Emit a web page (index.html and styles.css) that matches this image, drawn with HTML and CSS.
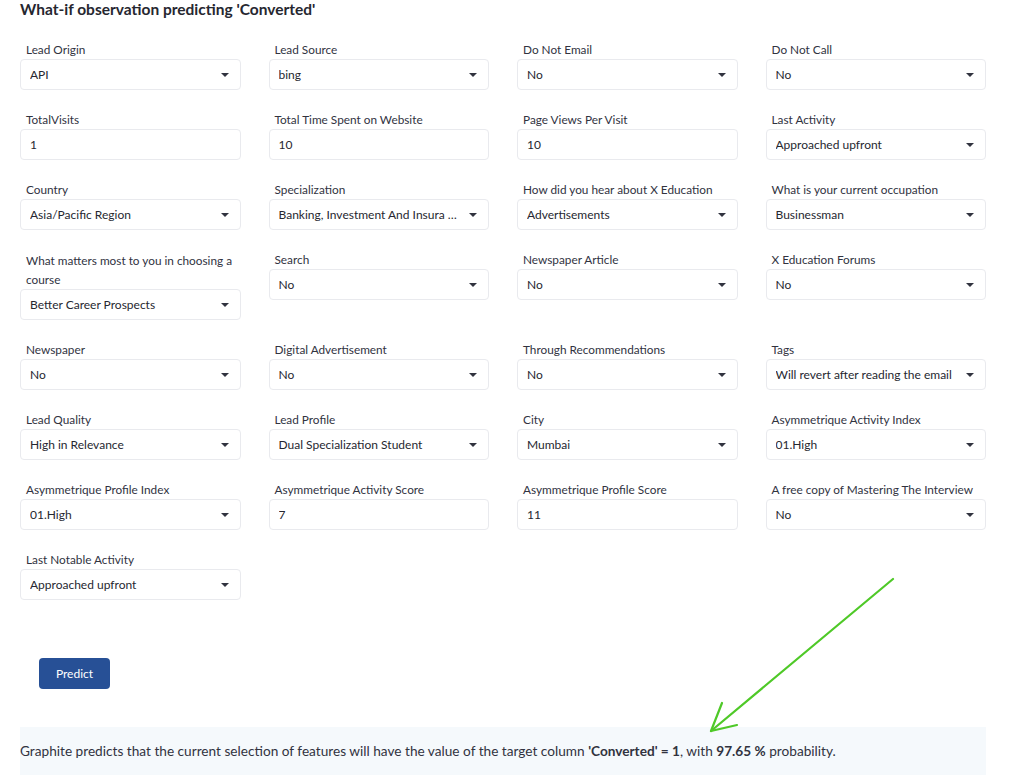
FILE: index.html
```html
<!DOCTYPE html>
<html>
<head>
<meta charset="utf-8">
<link rel="stylesheet" href="styles.css">
</head>
<body>
<div class="page">
  <h2 class="title">What-if observation predicting 'Converted'</h2>
  <div class="grid">
    <div class="field"><div class="label">Lead Origin</div><div class="box select"><span class="val">API</span><span class="caret"></span></div></div>
    <div class="field"><div class="label">Lead Source</div><div class="box select"><span class="val">bing</span><span class="caret"></span></div></div>
    <div class="field"><div class="label">Do Not Email</div><div class="box select"><span class="val">No</span><span class="caret"></span></div></div>
    <div class="field"><div class="label">Do Not Call</div><div class="box select"><span class="val">No</span><span class="caret"></span></div></div>

    <div class="field"><div class="label">TotalVisits</div><div class="box"><span class="val">1</span></div></div>
    <div class="field"><div class="label">Total Time Spent on Website</div><div class="box"><span class="val">10</span></div></div>
    <div class="field"><div class="label">Page Views Per Visit</div><div class="box"><span class="val">10</span></div></div>
    <div class="field"><div class="label">Last Activity</div><div class="box select"><span class="val">Approached upfront</span><span class="caret"></span></div></div>

    <div class="field"><div class="label">Country</div><div class="box select"><span class="val">Asia/Pacific Region</span><span class="caret"></span></div></div>
    <div class="field"><div class="label">Specialization</div><div class="box select"><span class="val">Banking, Investment And Insura …</span><span class="caret"></span></div></div>
    <div class="field"><div class="label">How did you hear about X Education</div><div class="box select"><span class="val">Advertisements</span><span class="caret"></span></div></div>
    <div class="field"><div class="label">What is your current occupation</div><div class="box select"><span class="val">Businessman</span><span class="caret"></span></div></div>

    <div class="field"><div class="label wrap">What matters most to you in choosing a course</div><div class="box select"><span class="val">Better Career Prospects</span><span class="caret"></span></div></div>
    <div class="field"><div class="label">Search</div><div class="box select"><span class="val">No</span><span class="caret"></span></div></div>
    <div class="field"><div class="label">Newspaper Article</div><div class="box select"><span class="val">No</span><span class="caret"></span></div></div>
    <div class="field"><div class="label">X Education Forums</div><div class="box select"><span class="val">No</span><span class="caret"></span></div></div>

    <div class="field"><div class="label">Newspaper</div><div class="box select"><span class="val">No</span><span class="caret"></span></div></div>
    <div class="field"><div class="label">Digital Advertisement</div><div class="box select"><span class="val">No</span><span class="caret"></span></div></div>
    <div class="field"><div class="label">Through Recommendations</div><div class="box select"><span class="val">No</span><span class="caret"></span></div></div>
    <div class="field"><div class="label">Tags</div><div class="box select"><span class="val">Will revert after reading the email</span><span class="caret"></span></div></div>

    <div class="field"><div class="label">Lead Quality</div><div class="box select"><span class="val">High in Relevance</span><span class="caret"></span></div></div>
    <div class="field"><div class="label">Lead Profile</div><div class="box select"><span class="val">Dual Specialization Student</span><span class="caret"></span></div></div>
    <div class="field"><div class="label">City</div><div class="box select"><span class="val">Mumbai</span><span class="caret"></span></div></div>
    <div class="field"><div class="label">Asymmetrique Activity Index</div><div class="box select"><span class="val">01.High</span><span class="caret"></span></div></div>

    <div class="field"><div class="label">Asymmetrique Profile Index</div><div class="box select"><span class="val">01.High</span><span class="caret"></span></div></div>
    <div class="field"><div class="label">Asymmetrique Activity Score</div><div class="box"><span class="val">7</span></div></div>
    <div class="field"><div class="label">Asymmetrique Profile Score</div><div class="box"><span class="val">11</span></div></div>
    <div class="field"><div class="label">A free copy of Mastering The Interview</div><div class="box select"><span class="val">No</span><span class="caret"></span></div></div>

    <div class="field"><div class="label">Last Notable Activity</div><div class="box select"><span class="val">Approached upfront</span><span class="caret"></span></div></div>
  </div>
  <div class="actions"><button class="predict">Predict</button></div>
  <div class="result"><span>Graphite predicts that the current selection of features will have the value of the target column <b>'Converted' = 1</b>, with <b>97.65 %</b> probability.</span></div>
</div>
<svg class="arrow" width="1024" height="778" viewBox="0 0 1024 778">
  <g fill="none" stroke="#4fc928" stroke-width="2.2" stroke-linecap="round">
    <line x1="893" y1="579" x2="711" y2="731"/>
    <line x1="711" y1="731" x2="722" y2="703"/>
    <line x1="711" y1="731" x2="737" y2="725"/>
  </g>
</svg>
</body>
</html>
```
FILE: styles.css
```css
html, body {
  margin: 0;
  padding: 0;
  background: #ffffff;
}
body {
  font-family: Lato, "Noto Sans", sans-serif;
  color: #31333f;
  position: relative;
  width: 1024px;
  height: 778px;
  overflow: hidden;
}
.page {
  padding: 0 38px 0 20px;
}
.title {
  margin: 0;
  font-size: 15.5px;
  line-height: 18px;
  font-weight: 700;
  color: #262730;
}
.grid {
  margin-top: 22px;
  width: 966px;
  display: grid;
  grid-template-columns: repeat(4, 1fr);
  column-gap: 28px;
  row-gap: 20px;
  align-items: start;
}
.field {
  display: flex;
  flex-direction: column;
}
.label {
  font-size: 11.8px;
  line-height: 19px;
  color: #31333f;
  padding-left: 6px;
  padding-right: 0;
}
.label.wrap {
  padding-top: 1px;
}
.box {
  height: 31px;
  box-sizing: border-box;
  border: 1px solid #e9eaee;
  border-radius: 4px;
  background: #fff;
  display: flex;
  align-items: center;
  padding: 0 11px 0 9px;
  font-size: 12px;
  color: #262730;
}
.val {
  flex: 1;
  white-space: nowrap;
  overflow: hidden;
}
.caret {
  width: 0;
  height: 0;
  border-left: 4px solid transparent;
  border-right: 4px solid transparent;
  border-top: 4px solid #31333f;
  margin-left: 8px;
}
.actions {
  margin-top: 58px;
  padding-left: 19px;
}
.predict {
  width: 71px;
  height: 31px;
  border: none;
  border-radius: 4px;
  background: #275096;
  color: #ffffff;
  font-family: Lato, "Noto Sans", sans-serif;
  font-size: 12px;
  padding: 0;
}
.result {
  margin-top: 38px;
  width: 966px;
  height: 48px;
  box-sizing: border-box;
  background: #f5f9fc;
  display: flex;
  align-items: center;
  font-size: 13.65px;
  color: #31333f;
  white-space: nowrap;
}
.result b {
  font-weight: 700;
}
.arrow {
  position: absolute;
  left: 0;
  top: 0;
  pointer-events: none;
}
```
